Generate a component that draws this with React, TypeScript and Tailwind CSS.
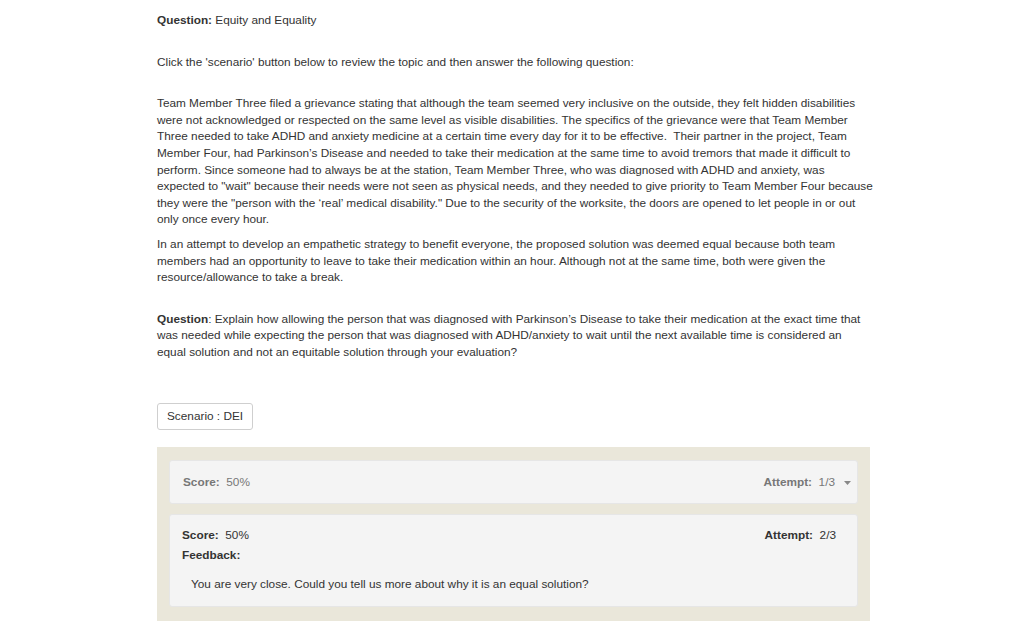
import React from "react";

export default function App() {
  return (
    <div className="min-h-screen w-full bg-white text-[#333] font-['Liberation_Sans',Arial,sans-serif] text-[11.8px] leading-[16.6px]">
      <div className="ml-[157px] w-[713px] pt-3">
        <p>
          <b>Question:</b> Equity and Equality
        </p>
        <p className="mt-[25px]">
          Click the 'scenario' button below to review the topic and then answer the following question:
        </p>
        <p className="mt-[25px] whitespace-nowrap">
          Team Member Three filed a grievance stating that although the team seemed very inclusive on the outside, they
          felt hidden disabilities
          <br />
          were not acknowledged or respected on the same level as visible disabilities. The specifics of the grievance
          were that Team Member
          <br />
          Three needed to take ADHD and anxiety medicine at a certain time every day for it to be effective.&nbsp; Their
          partner in the project, Team
          <br />
          Member Four, had Parkinson’s Disease and needed to take their medication at the same time to avoid tremors that
          made it difficult to
          <br />
          perform. Since someone had to always be at the station, Team Member Three, who was diagnosed with ADHD and
          anxiety, was
          <br />
          expected to "wait" because their needs were not seen as physical needs, and they needed to give priority to
          Team Member Four because
          <br />
          they were the "person with the ‘real’ medical disability." Due to the security of the worksite, the doors are
          opened to let people in or out
          <br />
          only once every hour.
        </p>
        <p className="mt-[8px]">
          In an attempt to develop an empathetic strategy to benefit everyone, the proposed solution was deemed equal
          because both team members had an opportunity to leave to take their medication within an hour. Although not
          at the same time, both were given the resource/allowance to take a break.
        </p>
        <p className="mt-[25px]">
          <b>Question</b>: Explain how allowing the person that was diagnosed with Parkinson’s Disease to take their
          medication at the exact time that was needed while expecting the person that was diagnosed with ADHD/anxiety
          to wait until the next available time is considered an equal solution and not an equitable solution through
          your evaluation?
        </p>

        <button className="mt-[42px] h-[27px] rounded-[3px] border border-[#cfcfcf] bg-white px-[9px] text-[11.8px] text-[#333]">
          Scenario : DEI
        </button>

        <div className="mt-[17px] bg-[#eae7da] px-3 pt-[13px] pb-4">
          <div className="flex h-[44px] items-center justify-between rounded-[3px] border border-[#e6e6e6] bg-[#f4f4f4] pl-[13px] pr-[6px] text-[#777]">
            <p className="mt-[2px]">
              <b>Score:</b>&nbsp; 50%
            </p>
            <div className="mt-[2px] flex items-center">
              <p>
                <b>Attempt:</b>&nbsp; 1/3
              </p>
              <svg width="7" height="4" viewBox="0 0 7 4" className="ml-[9px] mt-px">
                <path d="M0 0h7L3.5 4z" fill="#888" />
              </svg>
            </div>
          </div>

          <div className="mt-[10px] rounded-[3px] border border-[#e6e6e6] bg-[#f4f4f4] pl-[12px] pr-[21px] pt-[12px] pb-[14px]">
            <div className="flex justify-between">
              <p>
                <b>Score:</b>&nbsp; 50%
              </p>
              <p>
                <b>Attempt:</b>&nbsp; 2/3
              </p>
            </div>
            <p className="mt-[4px]">
              <b>Feedback:</b>
            </p>
            <p className="mt-[12px] pl-[9px]">You are very close. Could you tell us more about why it is an equal solution?</p>
          </div>
        </div>
      </div>
    </div>
  );
}
